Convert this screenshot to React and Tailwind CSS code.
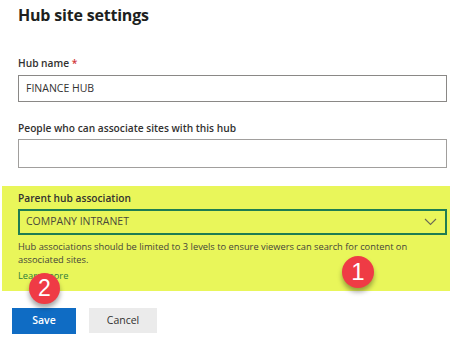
import React from "react";

export default function App() {
  return (
    <div className="relative w-[450px] h-[339px] overflow-hidden bg-white text-[#323130]" style={{ fontFamily: '"Open Sans", "Noto Sans", sans-serif' }}>
      <div className="pl-[18px] pt-[3px]">
        <h1 className="text-[16px] leading-[24px] font-bold text-[#201f1e] tracking-[-0.2px]">Hub site settings</h1>
      </div>

      <div className="pl-[18px] pr-[3px] mt-[29px]">
        <div className="text-[10.2px] leading-[15px] font-semibold">
          Hub name <span className="text-[#d13438]">*</span>
        </div>
        <div className="mt-[4px] h-[27px] border border-[#8a8886] flex items-center px-[7px] text-[10.5px]">FINANCE HUB</div>
      </div>

      <div className="pl-[18px] pr-[3px] mt-[19px]">
        <div className="text-[10.2px] leading-[15px] font-semibold">People who can associate sites with this hub</div>
        <div className="mt-[3px] h-[29px] border border-[#a19f9d]"></div>
      </div>

      <div className="ml-[2px] mt-[18px] bg-[#e9f65a] pl-[16px] pr-[3px] pt-[5px] pb-[9px]">
        <div className="text-[10.2px] leading-[15px] font-semibold">Parent hub association</div>
        <div className="mt-[3px] h-[26px] border-2 border-[#1e7d52] flex items-center justify-between pl-[6px] pr-[8px] text-[10.5px] text-[#4a4a3a]">
          <span>COMPANY INTRANET</span>
          <svg width="13" height="8" viewBox="0 0 13 8" fill="none">
            <path d="M1 1l5.5 5.5L12 1" stroke="#6b6b55" strokeWidth="1.1" />
          </svg>
        </div>
        <div className="mt-[5px] text-[9.3px] leading-[13px] text-[#44443a]">
          Hub associations should be limited to 3 levels to ensure viewers can search for content on associated sites.
        </div>
        <div className="mt-[3px] text-[9.3px] leading-[13px] text-[#2f7d3a]">Learn more</div>
      </div>

      <div className="flex gap-[13px] pl-[12px] mt-[17px]">
        <button className="w-[64px] h-[26px] bg-[#0f6cc4] text-white text-[10.5px] font-semibold">Save</button>
        <button className="w-[68px] h-[25px] bg-[#ebebeb] text-[#323130] text-[10.5px]">Cancel</button>
      </div>

      <div className="absolute left-[342px] top-[256px] w-[32px] h-[32px] rounded-full bg-[#ef3b45] text-white flex items-center justify-center text-[24px] leading-none shadow-[0_4px_5px_rgba(0,0,0,0.35)]" style={{ fontFamily: '"Liberation Sans", sans-serif' }}>1</div>
      <div className="absolute left-[29px] top-[273px] w-[31px] h-[31px] rounded-full bg-[#ef3b45] text-white flex items-center justify-center text-[23px] leading-none shadow-[0_4px_5px_rgba(0,0,0,0.35)]" style={{ fontFamily: '"Liberation Sans", sans-serif' }}>2</div>
    </div>
  );
}
